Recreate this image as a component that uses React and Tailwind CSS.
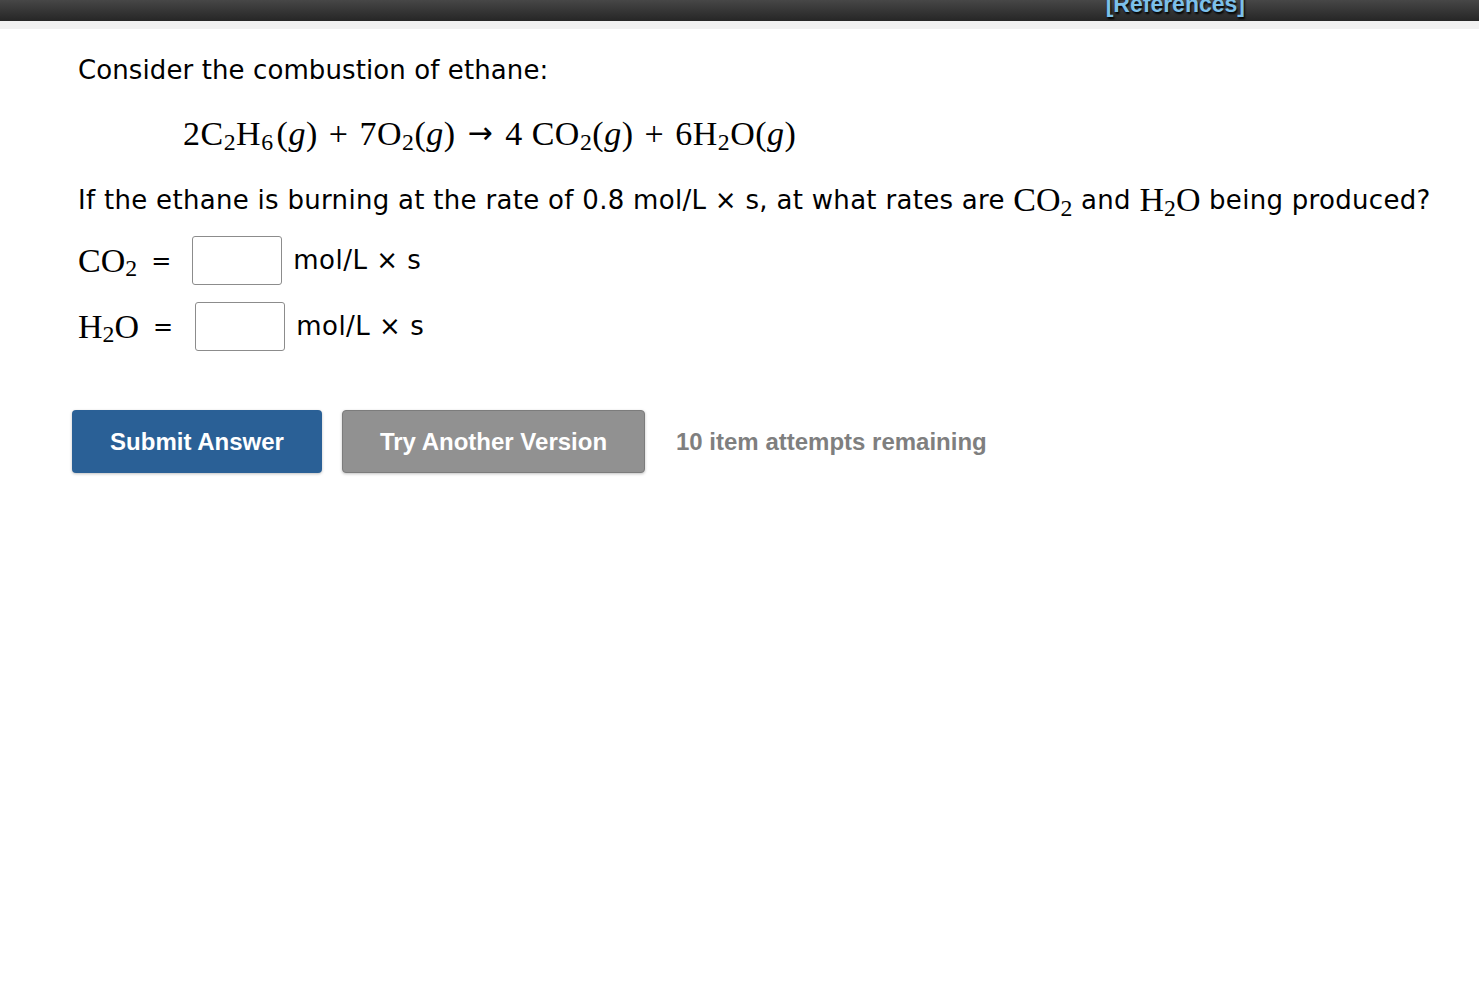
import React from 'react'

const Sub = ({ children }) => (
  <sub className="text-[0.7em] relative top-[0.2em] align-baseline">{children}</sub>
)

const Math = ({ children, className = '' }) => (
  <span className={`font-['Liberation_Serif',serif] ${className}`}>{children}</span>
)

const Arrow = () => (
  <span className="mx-[12px] font-['DejaVu_Sans',sans-serif] text-[30px] relative -top-[2px]">→</span>
)

const UnitRow = ({ label, boxClass }) => (
  <div className="flex items-center h-[49px]">
    <Math className="text-[34px] leading-none">{label}</Math>
    <span className="ml-[14px] mr-[20px] text-[24px]">=</span>
    <input
      type="text"
      className={`h-[49px] w-[90px] rounded-[3px] border border-[#8c8c8c] bg-white outline-none ${boxClass}`}
    />
    <span className="ml-[11px] text-[26px] tracking-[0.5px]">mol/L × s</span>
  </div>
)

export default function App() {
  return (
    <div className="min-h-[995px] bg-white font-['DejaVu_Sans',Verdana,sans-serif] text-black">
      <div className="h-[21px] bg-gradient-to-b from-[#474747] to-[#262626] overflow-hidden flex justify-end pr-[234px]">
        <span
          className="font-['Liberation_Sans',Arial,sans-serif] font-bold text-[23px] leading-none -mt-[7px] text-[#7cc0ea]"
          style={{ textShadow: '1px 2px 2px #000' }}
        >
          [References]
        </span>
      </div>
      <div className="h-[8px] bg-[#f0f0f0]" />

      <div className="pl-[78px] pt-[23px]">
        <p className="text-[26px] tracking-[0.1px] leading-[36px]">Consider the combustion of ethane:</p>

        <div className="pl-[105px] mt-[26px] h-[40px] flex items-center">
          <Math className="text-[34px] leading-none tracking-[0.5px]">
            2C<Sub>2</Sub>H<Sub>6</Sub><span className="ml-[3px]">(<i>g</i>)</span>
            <span className="mx-[11px]">+</span>
            7O<Sub>2</Sub>(<i>g</i>)
            <Arrow />
            4 CO<Sub>2</Sub>(<i>g</i>)
            <span className="mx-[11px]">+</span>
            6H<Sub>2</Sub>O(<i>g</i>)
          </Math>
        </div>

        <p className="mt-[26px] text-[26px] tracking-[0.3px] leading-[40px] flex items-center whitespace-nowrap">
          <span>If the ethane is burning at the rate of 0.8 mol/L × s, at what rates are&nbsp;</span>
          <Math className="text-[34px] leading-none tracking-normal">CO<Sub>2</Sub></Math>
          <span>&nbsp;and&nbsp;</span>
          <Math className="text-[34px] leading-none tracking-normal">H<Sub>2</Sub>O</Math>
          <span>&nbsp;being produced?</span>
        </p>

        <div className="mt-[16px]">
          <UnitRow label={<>CO<Sub>2</Sub></>} boxClass="ml-[1px]" />
        </div>
        <div className="mt-[17px]">
          <UnitRow label={<>H<Sub>2</Sub>O</>} boxClass="ml-[2px]" />
        </div>
      </div>

      <div className="pl-[72px] mt-[59px] flex items-center font-['Liberation_Sans',Arial,sans-serif] font-bold">
        <button className="h-[63px] w-[250px] rounded-[4px] bg-[#2a6096] text-white text-[24px] shadow-[0_1px_3px_rgba(0,0,0,0.25)]">
          Submit Answer
        </button>
        <button className="ml-[20px] h-[63px] w-[303px] rounded-[4px] bg-[#919191] border border-[#7c7c7c] text-white text-[24px] shadow-[0_1px_3px_rgba(0,0,0,0.25)]">
          Try Another Version
        </button>
        <span className="ml-[31px] text-[24px] text-[#7f7f7f]">10 item attempts remaining</span>
      </div>
    </div>
  )
}
